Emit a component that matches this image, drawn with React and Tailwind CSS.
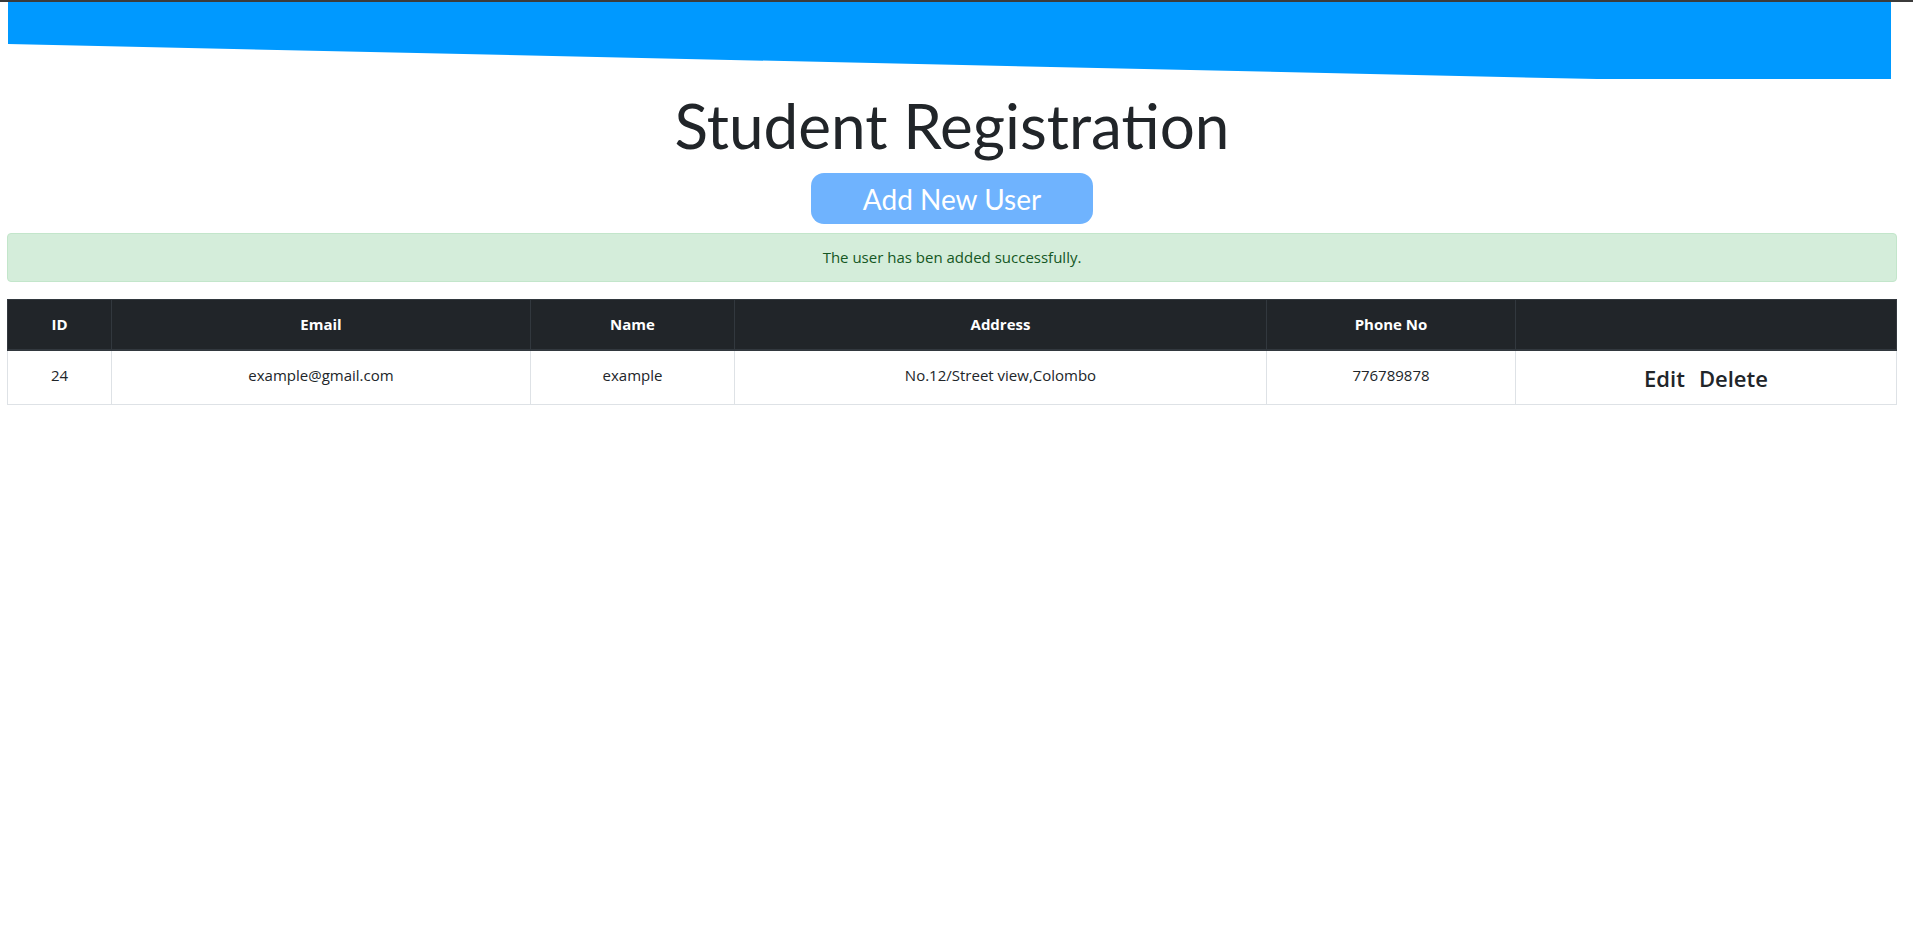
import React from 'react'

const users = [
  { id: 24, email: 'example@gmail.com', name: 'example', address: 'No.12/Street view,Colombo', phone: '776789878' },
]

const columns = [
  { label: 'ID', width: 'w-[104px]' },
  { label: 'Email', width: 'w-[419px]' },
  { label: 'Name', width: 'w-[204px]' },
  { label: 'Address', width: 'w-[532px]' },
  { label: 'Phone No', width: 'w-[249px]' },
  { label: '', width: '' },
]

function Wave() {
  return (
    <svg className="block ml-[8px]" width="1883" height="77" viewBox="0 0 1883 77" preserveAspectRatio="none">
      <polygon points="0,0 1883,0 1883,77 1589,77 0,42" fill="#0099ff" />
    </svg>
  )
}

export default function App() {
  return (
    <div className="min-h-screen bg-white text-[#212529] font-['Open_Sans',sans-serif]">
      <div className="h-[2px] bg-[#3b3b3b]" />
      <Wave />

      <div className="pl-[7px] pr-[16px]">
        {/* Title */}
        <h1 className="mt-[8px] text-center font-['Lato',sans-serif] text-[62px] leading-[76px] text-[#212529]">
          Student Registration
        </h1>

        <div className="flex justify-center mt-[10px]">
          <button className="w-[282px] h-[51px] rounded-[13px] bg-[#6fb3fe] text-white font-['Lato',sans-serif] text-[28px] leading-none">
            Add New User
          </button>
        </div>

        {/* Alert */}
        <div className="mt-[9px] h-[49px] flex items-center justify-center rounded-[4px] border border-[#c3e6cb] bg-[#d4edda] text-[#155724] text-[15px]">
          The user has ben added successfully.
        </div>

        {/* Table */}
        <table className="mt-[17px] w-full border-collapse text-[15px]">
          <thead>
            <tr className="bg-[#212529] text-white">
              {columns.map((c, i) => (
                <th
                  key={i}
                  className={`${c.width} h-[50px] border border-[#32383e] border-b-2 font-bold text-center align-middle`}
                >
                  {c.label}
                </th>
              ))}
            </tr>
          </thead>
          <tbody>
            {users.map(u => (
              <tr key={u.id} className="h-[55px]">
                <td className="border border-[#dee2e6] text-center align-top pt-[13px]">{u.id}</td>
                <td className="border border-[#dee2e6] text-center align-top pt-[13px]">{u.email}</td>
                <td className="border border-[#dee2e6] text-center align-top pt-[13px]">{u.name}</td>
                <td className="border border-[#dee2e6] text-center align-top pt-[13px]">{u.address}</td>
                <td className="border border-[#dee2e6] text-center align-top pt-[13px]">{u.phone}</td>
                <td className="border border-[#dee2e6] text-center align-middle pt-[2px]">
                  <div className="flex justify-center gap-[14px] text-[22px] font-semibold text-[#212529]">
                    <button>Edit</button>
                    <button>Delete</button>
                  </div>
                </td>
              </tr>
            ))}
          </tbody>
        </table>
      </div>
    </div>
  )
}
